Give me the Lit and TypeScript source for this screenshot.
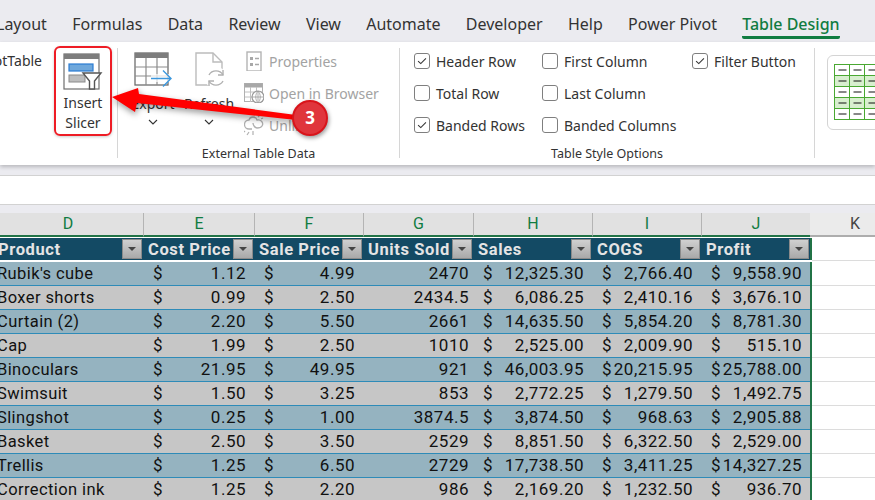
import { LitElement, html, css, svg } from 'lit';
import { customElement } from 'lit/decorators.js';

const TABS = ['Layout', 'Formulas', 'Data', 'Review', 'View', 'Automate', 'Developer', 'Help', 'Power Pivot'];
const COLS = ['D', 'E', 'F', 'G', 'H', 'I', 'J'];
const HEADS = ['Product', 'Cost Price', 'Sale Price', 'Units Sold', 'Sales', 'COGS', 'Profit'];
const ROWS = [
  ["Rubik's cube", '1.12', '4.99', '2470', '12,325.30', '2,766.40', '9,558.90'],
  ['Boxer shorts', '0.99', '2.50', '2434.5', '6,086.25', '2,410.16', '3,676.10'],
  ['Curtain (2)', '2.20', '5.50', '2661', '14,635.50', '5,854.20', '8,781.30'],
  ['Cap', '1.99', '2.50', '1010', '2,525.00', '2,009.90', '515.10'],
  ['Binoculars', '21.95', '49.95', '921', '46,003.95', '20,215.95', '25,788.00'],
  ['Swimsuit', '1.50', '3.25', '853', '2,772.25', '1,279.50', '1,492.75'],
  ['Slingshot', '0.25', '1.00', '3874.5', '3,874.50', '968.63', '2,905.88'],
  ['Basket', '2.50', '3.50', '2529', '8,851.50', '6,322.50', '2,529.00'],
  ['Trellis', '1.25', '6.50', '2729', '17,738.50', '3,411.25', '14,327.25'],
  ['Correction ink', '1.25', '2.20', '986', '2,169.20', '1,232.50', '936.70'],
];

const checkMark = svg`<svg class="tick" viewBox="0 0 16 16"><path d="M3.5 8.2 6.6 11 12.5 5" fill="none" stroke="#333" stroke-width="1.2"/></svg>`;

@customElement('app-root')
export class AppRoot extends LitElement {
  static styles = css`
    :host {
      display: block;
      position: relative;
      width: 875px;
      height: 500px;
      overflow: hidden;
      background: #fff;
      font-family: 'Noto Sans', sans-serif;
      color: #333;
    }
    .tabs {
      display: flex;
      height: 42px;
      background: #ebebf0;
      margin-left: -4px;
      font-size: 16px;
      color: #333;
    }
    .tab {
      margin-right: 25.3px;
      padding-top: 13px;
      line-height: 22px;
      white-space: nowrap;
    }
    .tab.on {
      color: #107c41;
      font-weight: 500;
      height: 23px;
      border-bottom: 3px solid #107c41;
      border-radius: 0 0 2px 2px;
    }
    .ribbon {
      display: flex;
      height: 123px;
      background: #fff;
      box-shadow: 0 2px 4px rgba(0, 0, 0, 0.22);
      position: relative;
      font-size: 14px;
    }
    .group {
      display: flex;
      flex-direction: column;
      flex: none;
    }
    .body {
      display: flex;
      height: 98px;
      padding-top: 3px;
    }
    .label {
      height: 20px;
      line-height: 22px;
      text-align: center;
      font-size: 12.5px;
      color: #333;
    }
    .sep {
      width: 1px;
      flex: none;
      margin: 6px 0 7px;
      background: #d6d6d6;
    }
    .g1 { width: 117px; }
    .g2 { width: 281px; }
    .g3 { width: 414px; }
    .pivot {
      width: 42px;
      height: 32px;
      line-height: 32px;
      overflow: hidden;
      display: flex;
      justify-content: flex-end;
    }
    .slicer {
      margin: 1px 0 0 12px;
      width: 58px;
      height: 90px;
      box-sizing: border-box;
      border: 2px solid #ee1c25;
      border-radius: 6px;
      text-align: center;
      line-height: 20px;
      font-size: 14px;
      box-shadow: 0 1px 3px rgba(0, 0, 0, 0.2);
    }
    .slicer svg { display: block; margin: 5px auto 2px; }
    .big {
      width: 56px;
      text-align: center;
      line-height: 20px;
    }
    .big svg.ic { display: block; margin: 7px auto 6px; }
    .big .chev { display: block; margin: 5px auto 0; }
    .exp { margin-left: 7px; }
    .small {
      display: flex;
      flex-direction: column;
      margin-left: 7px;
      color: #a3a3a3;
    }
    .srow {
      display: flex;
      align-items: center;
      height: 32px;
      gap: 5px;
      white-space: nowrap;
    }
    .opts {
      display: grid;
      grid-template-columns: 128px 150px auto;
      grid-auto-rows: 32px;
      padding-left: 14px;
    }
    .opt {
      display: flex;
      align-items: center;
      gap: 6px;
      white-space: nowrap;
    }
    .box {
      width: 16px;
      height: 16px;
      box-sizing: border-box;
      border: 1px solid #7f7f7f;
      border-radius: 3px;
      background: #fff;
    }
    .tick { display: block; width: 14px; height: 14px; }
    .gallery {
      margin: 13px 0 0 12px;
      width: 80px;
      height: 75px;
      box-sizing: border-box;
      border: 1px solid #d4d4d4;
      border-radius: 6px;
      padding: 8px 0 0 6px;
    }
    .band { height: 10px; background: #ebebf0; border-bottom: 1px solid #d2d2d2; }
    .fx { height: 28px; background: #fff; }
    .band2 { height: 8px; background: #ebebf0; border-top: 1px solid #d2d2d2; }
    .sheet {
      display: grid;
      grid-template-columns: 150px 111px 109px 110px 119px 109px 109px 90px;
      margin-left: -7px;
      font-family: Roboto, sans-serif;
      font-size: 16.5px;
      color: #111;
    }
    .ch {
      height: 22px;
      line-height: 22px;
      background: #e1e1e1;
      text-align: center;
      color: #107c41;
      font-size: 16px;
      border-left: 1px solid #b4b4b4;
      border-bottom: 2px solid #217346;
      margin-bottom: 1px;
    }
    .ch:first-child { border-left: none; }
    .ch.k {
      background: #ebebeb;
      color: #444;
      border-left: none;
      border-bottom: 2px solid #adadad;
    }
    .hd {
      display: flex;
      justify-content: space-between;
      align-items: center;
      height: 22px;
      background: #134a64;
      color: #e4e4e4;
      font-weight: 700;
      letter-spacing: 0.6px;
      padding-left: 5px;
      margin-bottom: 1px;
      white-space: nowrap;
      overflow: hidden;
    }
    .hd:first-child { padding-left: 5px; }
    .fb {
      flex: none;
      position: relative;
      width: 20px;
      height: 20px;
      margin-right: 1px;
      box-sizing: border-box;
      border: 1px solid #8a8a8a;
      background: linear-gradient(#d0d0d0, #a9a9a9);
    }
    .fb::after {
      content: '';
      position: absolute;
      left: 5px;
      top: 7px;
      border: 4px solid transparent;
      border-top: 4px solid #444;
    }
    .c {
      display: flex;
      justify-content: space-between;
      height: 23px;
      line-height: 23px;
      padding: 0 8px 0 10px;
      border-bottom: 1px solid #2e8bb8;
      white-space: nowrap;
      font-size: 17px;
      letter-spacing: 0.5px;
    }
    .c.odd { background: #95b3c0; }
    .c.even { background: #c6c6c6; border-right: 1px solid #aaa; margin-right: -1px; }
    .c.name { padding-left: 4px; font-size: 16.5px; letter-spacing: 0.4px; }
    .c.num { justify-content: flex-end; padding-right: 4px; }
    .c.last, .hd.last, .ch.last { box-shadow: 2px 0 0 #217346; }
    .c.last { margin-right: 0; border-right: none; }
    .ke {
      margin-left: 2px;
      height: 23px;
      border-bottom: 1px solid #dcdcdc;
    }
    .hk {
      margin-left: 2px;
      height: 22px;
      margin-bottom: 1px;
      border-bottom: 1px solid #dcdcdc;
    }
    .arrow {
      position: absolute;
      left: 0;
      top: 0;
      filter: drop-shadow(1px 3px 3px rgba(0, 0, 0, 0.4));
    }
    .badge {
      position: absolute;
      left: 292px;
      top: 100px;
      width: 36px;
      height: 36px;
      box-sizing: border-box;
      border: 2px solid #d9141b;
      border-radius: 50%;
      background: #e0353c;
      color: #fff;
      font: 700 17px/32px 'Noto Sans', sans-serif;
      text-align: center;
      box-shadow: 1px 2px 4px rgba(0, 0, 0, 0.4);
    }
  `;

  private opt(name: string, on: boolean) {
    return html`<div class="opt"><span class="box">${on ? checkMark : ''}</span>${name}</div>`;
  }

  private slicerIcon() {
    return svg`<svg width="40" height="38" viewBox="0 0 40 38">
      <rect x="1" y="1" width="35" height="35" fill="#fff" stroke="#6e6e6e" stroke-width="1.2"/>
      <rect x="1" y="1" width="35" height="5" fill="#7d7d7d"/>
      <rect x="6" y="11" width="24" height="7" fill="#6fa8dc" stroke="#2b7cd3" stroke-width="1.2"/>
      <rect x="6" y="22" width="16" height="7" fill="#bdbdbd" stroke="#8a8a8a"/>
      <path d="M20 20H38L31.5 28V36H26.5V28Z" fill="#fff" stroke="#555" stroke-width="1.4"/>
    </svg>`;
  }

  private exportIcon() {
    return svg`<svg class="ic" width="38" height="36" viewBox="0 0 38 36">
      <rect x="1" y="1" width="33" height="32" fill="#fff" stroke="#6e6e6e" stroke-width="1.3"/>
      <rect x="1" y="1" width="33" height="5" fill="#7d7d7d"/>
      <path d="M12 6V33M23 6V33M1 15H34M1 24H34" stroke="#8c8c8c" stroke-width="1.2" fill="none"/>
      <path d="M17 22H37V30H17Z" fill="#fff" fill-opacity=".7"/>
      <path d="M17 26.500H37M29 18.500 37 26.500 29 34.500" stroke="#3c97dd" stroke-width="1.4" fill="none"/>
    </svg>`;
  }

  private refreshIcon() {
    return svg`<svg class="ic" width="40" height="36" viewBox="0 0 40 36">
      <path d="M7 1H24L33 10V33H7Z" fill="#fff" stroke="#bcbcbc" stroke-width="1.4"/>
      <path d="M24 1V10H33" fill="none" stroke="#bcbcbc" stroke-width="1.4"/>
      <circle cx="27" cy="26" r="11" fill="#fff"/>
      <path d="M20 23A8 8 0 0 1 34 23M34 29A8 8 0 0 1 20 29" fill="none" stroke="#b0b0b0" stroke-width="1.4"/>
      <path d="M34 18V23H29M20 34V29H25" fill="none" stroke="#b0b0b0" stroke-width="1.4"/>
    </svg>`;
  }

  private chevron() {
    return svg`<svg class="chev" width="10" height="6" viewBox="0 0 10 6"><path d="M1 1 5 5 9 1" fill="none" stroke="#333" stroke-width="1.1"/></svg>`;
  }

  private propsIcon() {
    return svg`<svg width="20" height="20" viewBox="0 0 20 20">
      <rect x="3" y="1" width="14" height="19" fill="#fff" stroke="#b4b4b4" stroke-width="1.4"/>
      <path d="M6 6h3v3H6zM6 12h3v3H6z" fill="#a8a8a8"/><path d="M11 7.500h4M11 13.500h4" stroke="#a8a8a8" stroke-width="1.4"/>
    </svg>`;
  }

  private browserIcon() {
    return svg`<svg width="20" height="20" viewBox="0 0 20 20">
      <rect x=".5" y=".5" width="18" height="18" fill="#fff" stroke="#b0b0b0"/>
      <rect x=".5" y=".5" width="18" height="4" fill="#a8a8a8"/>
      <path d="M6.500 4V19M12.500 4V19M1 9H19M1 14H19" stroke="#c0c0c0" fill="none"/>
      <circle cx="14" cy="14" r="6" fill="#fff" stroke="#9a9a9a" stroke-width="1.2"/>
      <path d="M8 14H20M14 8V20M14 8C11 11 11 17 14 20M14 8C17 11 17 17 14 20" stroke="#9a9a9a" fill="none" stroke-width=".8"/>
    </svg>`;
  }

  private unlinkIcon() {
    return svg`<svg width="20" height="22" viewBox="0 0 20 22">
      <path d="M8 15H5A4.500 4.500 0 0 1 5 6C6 2 12 2 13 6 17 5 20 9 18 12 17 14 15 14 13 14 11 14 9 11 9 9" fill="none" stroke="#b0b0b0" stroke-width="1.3"/>
      <path d="M5 18 3 21M9 17V21M1 17 0 18M16 1 14 3M19 4 17 5" stroke="#b0b0b0" stroke-width="1.2"/>
    </svg>`;
  }

  private styleThumb() {
    const cells = [];
    for (let r = 0; r < 5; r++) {
      for (let c = 0; c < 3; c++) {
        const x = 0.5 + c * 15;
        const y = 0.5 + r * 11;
        cells.push(svg`<rect x=${x} y=${y} width="15" height="11" fill=${r % 2 ? '#d8efcf' : '#fff'} stroke="#4aa832"/>
          <path d="M${x + 4} ${y + 5.500}h8" stroke="#111"/>`);
      }
    }
    return svg`<svg width="60" height="57" viewBox="0 0 60 57">${cells}</svg>`;
  }

  private cell(col: number, v: string, odd: boolean, last: boolean) {
    const zebra = odd ? 'odd' : 'even';
    if (col === 0) return html`<div class="c name ${zebra}">${v}</div>`;
    if (col === 3) return html`<div class="c num ${zebra}">${v}</div>`;
    return html`<div class="c ${zebra} ${last ? 'last' : ''}"><span>$</span><span>${v}</span></div>`;
  }

  render() {
    return html`
      <div class="tabs">
        ${TABS.map((t) => html`<div class="tab">${t}</div>`)}
        <div class="tab on">Table Design</div>
      </div>

      <div class="ribbon">
        <div class="group g1">
          <div class="body">
            <div class="pivot"><span>PivotTable</span></div>
            <div class="slicer">${this.slicerIcon()}Insert<br />Slicer</div>
          </div>
        </div>
        <div class="sep"></div>
        <div class="group g2">
          <div class="body">
            <div class="big exp">${this.exportIcon()}Export${this.chevron()}</div>
            <div class="big">${this.refreshIcon()}Refresh${this.chevron()}</div>
            <div class="small">
              <div class="srow">${this.propsIcon()}Properties</div>
              <div class="srow">${this.browserIcon()}Open in Browser</div>
              <div class="srow">${this.unlinkIcon()}Unlink</div>
            </div>
          </div>
          <div class="label">External Table Data</div>
        </div>
        <div class="sep"></div>
        <div class="group g3">
          <div class="body">
            <div class="opts">
              ${this.opt('Header Row', true)}${this.opt('First Column', false)}${this.opt('Filter Button', true)}
              ${this.opt('Total Row', false)}${this.opt('Last Column', false)}<span></span>
              ${this.opt('Banded Rows', true)}${this.opt('Banded Columns', false)}<span></span>
            </div>
          </div>
          <div class="label">Table Style Options</div>
        </div>
        <div class="sep"></div>
        <div class="gallery">${this.styleThumb()}</div>
      </div>

      <div class="band"></div>
      <div class="fx"></div>
      <div class="band2"></div>

      <div class="sheet">
        ${COLS.map((c, i) => html`<div class="ch ${i === 6 ? 'last' : ''}">${c}</div>`)}
        <div class="ch k">K</div>
        ${HEADS.map(
          (h, i) => html`<div class="hd ${i === 6 ? 'last' : ''}"><span>${h}</span><span class="fb"></span></div>`,
        )}
        <div class="hk"></div>
        ${ROWS.map(
          (row, r) => html`
            ${row.map((v, i) => this.cell(i, v, r % 2 === 0, i === 6))}
            <div class="ke"></div>
          `,
        )}
      </div>

      <svg class="arrow" width="875" height="500" viewBox="0 0 875 500">
        <path d="M112 97 138 88 139 94 296 115 296 120 137 103 135 112Z" fill="#f00" />
      </svg>
      <div class="badge">3</div>
    `;
  }
}
